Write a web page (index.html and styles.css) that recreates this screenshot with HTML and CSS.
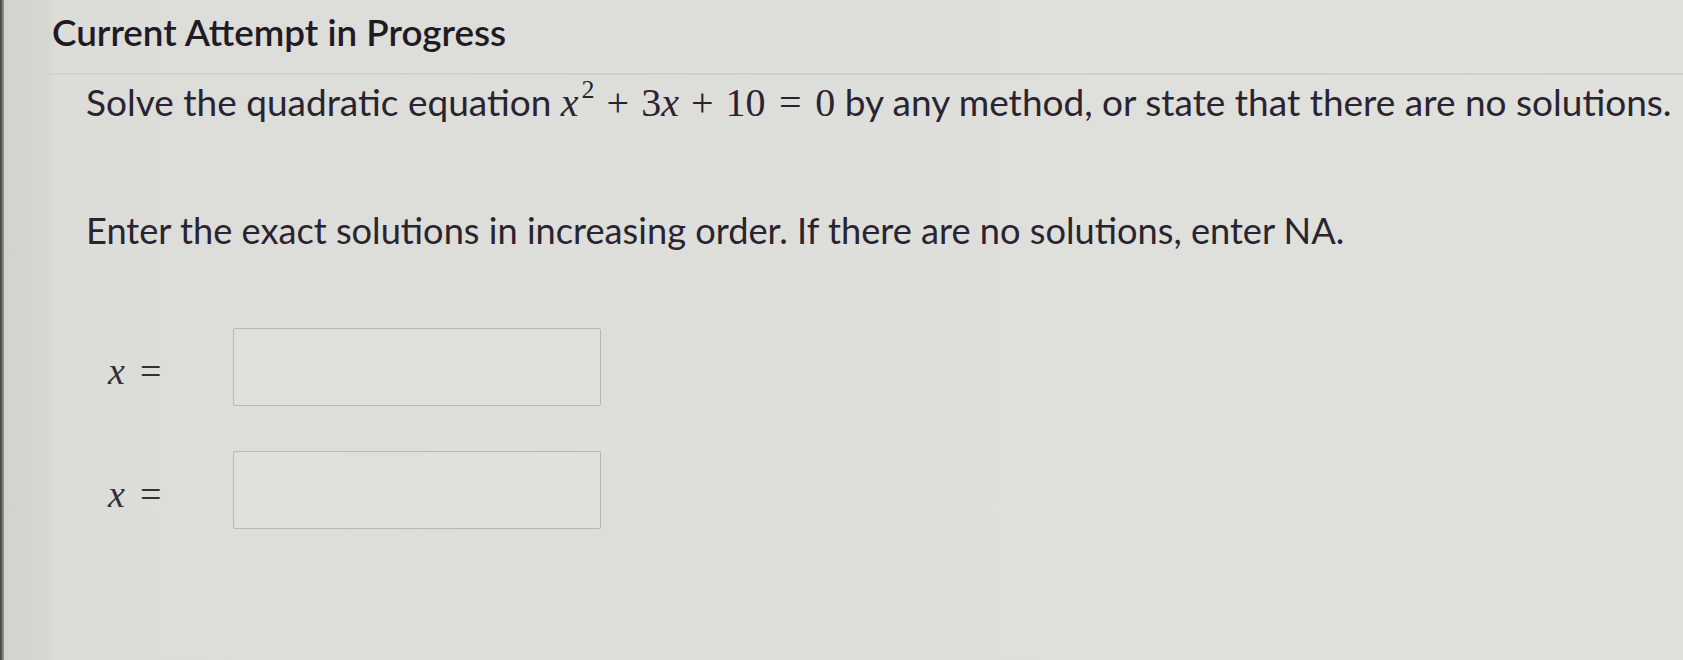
FILE: index.html
```html
<!DOCTYPE html>
<html>
<head>
<meta charset="utf-8">
<link rel="stylesheet" href="styles.css">
</head>
<body>
<div class="page">
  <div class="edge"></div>
  <div class="content">
    <h1 class="title">Current Attempt in Progress</h1>
    <div class="rule"></div>
    <div class="question">
      <p class="q-line first">Solve the quadratic equation <span class="math"><i>x</i><sup>2</sup><span class="op">+</span>3<i>x</i><span class="op">+</span>10<span class="rel">=</span>0</span> by any method, or state that there are no solutions.</p>
      <p class="q-line second">Enter the exact solutions in increasing order. If there are no solutions, enter NA.</p>
      <div class="answers">
        <div class="answer-row">
          <span class="math label"><i>x</i><span class="rel">=</span></span>
          <div class="box"></div>
        </div>
        <div class="answer-row">
          <span class="math label"><i>x</i><span class="rel">=</span></span>
          <div class="box"></div>
        </div>
      </div>
    </div>
  </div>
</div>
</body>
</html>
```

FILE: styles.css
```css
html, body {
  margin: 0;
  padding: 0;
}
body {
  width: 1683px;
  height: 660px;
  overflow: hidden;
  background: #dadad7;
  color: #2a2430;
  font-family: Lato, "Open Sans", sans-serif;
}
.page {
  display: flex;
  height: 660px;
}
.edge {
  width: 4px;
  background: linear-gradient(90deg, #3a3a3a, #9a9a98);
  flex: none;
}
.content {
  flex: 1;
  background: linear-gradient(90deg, #d2d2cf 0px, #d6d6d3 44px, #dcdcd9 52px, #dededb 900px, #e0e0dd 1683px);
}
.title {
  margin: 0;
  padding: 11px 0 0 48px;
  font-size: 36.8px;
  font-weight: 600;
  line-height: 42px;
  color: #1f1a24;
}
.rule {
  margin: 20px 0 0 42px;
  height: 2px;
  background: #d0d0cd;
}
.question {
  padding-left: 82px;
}
.q-line {
  margin: 0;
  font-size: 36.2px;
  line-height: 40px;
  white-space: nowrap;
}
.q-line.first {
  margin-top: 7px;
  font-size: 37px;
}
.q-line.second {
  margin-top: 87px;
}
.math {
  font-family: "Liberation Serif", "DejaVu Serif", serif;
  font-size: 40px;
}
.math sup {
  font-size: 26px;
  line-height: 0;
  vertical-align: 18px;
  margin-left: 3px;
}
.op {
  margin: 0 0.3em;
}
.rel {
  margin: 0 0.34em;
}
.answers {
  display: flex;
  flex-direction: column;
  gap: 45px;
  margin-top: 78px;
}
.answer-row {
  display: flex;
  align-items: center;
}
.label {
  width: 125px;
  padding-left: 22px;
  font-size: 38px;
  color: #33303a;
  position: relative;
  top: 4px;
}
.label .rel {
  margin-left: 0.4em;
}
.box {
  width: 366px;
  height: 76px;
  border: 1.5px solid #b8b6b6;
  border-radius: 2px;
  background: #dfdfdc;
}
```
